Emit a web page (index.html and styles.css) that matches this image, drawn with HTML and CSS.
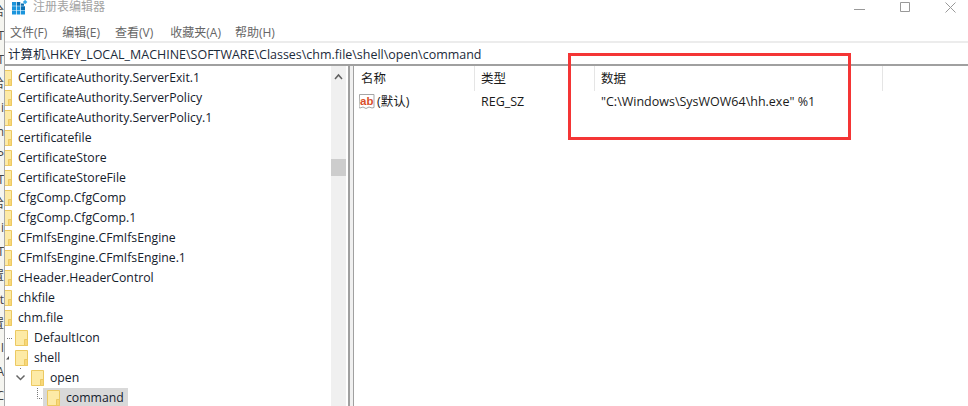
FILE: index.html
```html
<!DOCTYPE html>
<html lang="zh">
<head>
<meta charset="utf-8">
<title>注册表编辑器</title>
<link rel="stylesheet" href="styles.css">
</head>
<body>
<svg class="defs" width="0" height="0" aria-hidden="true">
  <symbol id="folder" viewBox="0 0 13 18">
    <path d="M.5 1.500h12v15H.5z" fill="#fdeaa6" stroke="#ecc962"/>
    <path d="M9.500 16.500v-6h3v6z" fill="#f8d778" stroke="#ecc962"/>
  </symbol>
</svg>
<aside class="behind">
  <span>哈</span><span>T</span><span>T</span><span>给</span><span>i</span><span>n</span><span>P</span><span>T</span><span>给</span><span>i</span><span>T</span><span>置</span><span>t</span><span>置</span><span>I</span><span>A</span><span>C</span>
</aside>
<main class="window">
  <header class="titlebar">
    <svg class="appicon" width="16" height="15" viewBox="0 0 16 15">
      <path d="M0 2h4v3.700H0zM0 6.300h4V10H0zM4.700 6.300h3.600V10H4.700zM0 10.600h4v3.900H0zM4.700 10.600h3.600v3.900H4.700zM9 10.600h4v3.900H9z" fill="#1a94dc"/>
      <path d="M4.700 2h3.600v3.700H4.700zM9 3.500h3v2.200H9zM9 6.300h4V10H9z" fill="#0b6fb2"/>
      <rect x="11.500" y="0.500" width="3.200" height="3.200" fill="#38a9e8" transform="rotate(45 13.100 2.100)"/>
    </svg>
    <span class="title">注册表编辑器</span>
    <div class="controls">
      <svg width="11" height="11" viewBox="0 0 11 11"><path d="M0 7.500h11" stroke="#999" fill="none"/></svg>
      <svg width="10" height="10" viewBox="0 0 10 10"><path d="M.5.500h9v9h-9z" stroke="#999" fill="none"/></svg>
      <svg width="11" height="11" viewBox="0 0 11 11"><path d="M.5.500l10 10M10.500.500l-10 10" stroke="#999" fill="none"/></svg>
    </div>
  </header>
  <nav class="menubar">
    <span>文件(F)</span><span>编辑(E)</span><span class="mid">查看(V)</span><span class="wide">收藏夹(A)</span><span>帮助(H)</span>
  </nav>
  <div class="address">计算机\HKEY_LOCAL_MACHINE\SOFTWARE\Classes\chm.file\shell\open\command</div>
  <div class="panes">
    <section class="tree">
      <ul class="rows">
        <li class="row"><i class="twist"></i><svg class="fold"><use href="#folder"/></svg><span>CertificateAuthority.ServerExit.1</span></li>
        <li class="row"><i class="twist"></i><svg class="fold"><use href="#folder"/></svg><span>CertificateAuthority.ServerPolicy</span></li>
        <li class="row"><i class="twist"></i><svg class="fold"><use href="#folder"/></svg><span>CertificateAuthority.ServerPolicy.1</span></li>
        <li class="row"><i class="twist"></i><svg class="fold"><use href="#folder"/></svg><span>certificatefile</span></li>
        <li class="row"><i class="twist"></i><svg class="fold"><use href="#folder"/></svg><span>CertificateStore</span></li>
        <li class="row"><i class="twist"></i><svg class="fold"><use href="#folder"/></svg><span>CertificateStoreFile</span></li>
        <li class="row"><i class="twist"></i><svg class="fold"><use href="#folder"/></svg><span>CfgComp.CfgComp</span></li>
        <li class="row"><i class="twist"></i><svg class="fold"><use href="#folder"/></svg><span>CfgComp.CfgComp.1</span></li>
        <li class="row"><i class="twist"></i><svg class="fold"><use href="#folder"/></svg><span>CFmIfsEngine.CFmIfsEngine</span></li>
        <li class="row"><i class="twist"></i><svg class="fold"><use href="#folder"/></svg><span>CFmIfsEngine.CFmIfsEngine.1</span></li>
        <li class="row"><i class="twist"></i><svg class="fold"><use href="#folder"/></svg><span>cHeader.HeaderControl</span></li>
        <li class="row"><i class="twist"></i><svg class="fold"><use href="#folder"/></svg><span>chkfile</span></li>
        <li class="row"><i class="twist"></i><svg class="fold"><use href="#folder"/></svg><span>chm.file</span></li>
        <li class="row l1"><i class="twist"><svg width="16" height="20" viewBox="0 0 16 20"><path d="M8 11.500h5" stroke="#777" stroke-dasharray="1 1" fill="none"/></svg></i><svg class="fold"><use href="#folder"/></svg><span>DefaultIcon</span></li>
        <li class="row l1"><i class="twist"><svg width="16" height="20" viewBox="0 0 16 20"><path d="M7 12.500l3-3.500v3.500z" fill="#555"/></svg></i><svg class="fold"><use href="#folder"/></svg><span>shell</span></li>
        <li class="row l2"><i class="twist"><svg width="16" height="20" viewBox="0 0 16 20"><path d="M5.500 1v1" stroke="#777" fill="none"/><path d="M1.500 8.500l4 4 4-4" stroke="#666" stroke-width="1.500" fill="none"/></svg></i><svg class="fold"><use href="#folder"/></svg><span>open</span></li>
        <li class="row l3"><i class="twist"><svg width="16" height="20" viewBox="0 0 16 20"><path d="M6.500 1v10.500H12" stroke="#777" stroke-dasharray="1 1" fill="none"/></svg></i><div class="selected"><svg class="fold"><use href="#folder"/></svg><span>command</span></div></li>
      </ul>
      <div class="scrollbar">
        <svg width="15" height="20" viewBox="0 0 15 20"><path d="M4 13l3.500-4 3.500 4" stroke="#606060" stroke-width="1.500" fill="none"/></svg>
        <div class="thumb"></div>
      </div>
    </section>
    <div class="splitter"></div>
    <section class="list">
      <div class="heads">
        <span class="c1">名称</span><span class="c2">类型</span><span class="c3">数据</span>
      </div>
      <div class="entry">
        <span class="c1 namecell">
          <svg width="16" height="16" viewBox="0 0 16 16">
            <path d="M.5.500h14.500v13l-2 .5-3-1-3 1.500-3-1.500-3 1-1-.5z" fill="#fff" stroke="#a5a5a5"/>
            <text x="7.800" y="10.500" class="ab">ab</text>
          </svg>(默认)</span>
        <span class="c2">REG_SZ</span>
        <span class="c3">"C:\Windows\SysWOW64\hh.exe" %1</span>
      </div>
    </section>
  </div>
</main>
<div class="callout"></div>
</body>
</html>
```
FILE: styles.css
```css
* { box-sizing: border-box; }
html, body { margin: 0; height: 100%; }
body {
  display: flex;
  width: 968px;
  height: 406px;
  overflow: hidden;
  background: #fff;
  font-family: "Open Sans", "Noto Sans CJK SC", sans-serif;
  font-size: 12.500px;
  color: #1a1a1a;
}
.defs { position: absolute; }
.behind {
  width: 4px;
  flex: none;
  overflow: hidden;
  background: #f5f5f0;
  display: flex;
  flex-direction: column;
  font-size: 12px;
  line-height: 24px;
  direction: rtl;
  color: #444;
}
.window { flex: 1; min-width: 0; display: flex; flex-direction: column; border-left: 1px solid #aaa; }
.titlebar { height: 22px; display: flex; align-items: flex-start; padding-left: 7px; }
.appicon { margin: 0; }
.title { margin: -2px 0 0 5px; font-size: 12px; line-height: 18px; color: #a3a3a3; }
.controls { margin-left: auto; display: flex; gap: 35px; padding: 2px 12px 0 0; }
.menubar { height: 19px; display: flex; padding-left: 5px; font-size: 12px; line-height: 21px; color: #666; }
.menubar span { margin-right: 15px; }
.menubar .mid { margin-right: 17px; }
.menubar .wide { margin-right: 14px; }
.address {
  height: 25px;
  border: solid #a0a0a0;
  border-width: 2px 0;
  border-top-color: #ececec;
  padding-left: 3px;
  line-height: 23px;
  font-size: 12.470px;
  color: #1c2a3a;
}
.panes { flex: 1; min-height: 0; display: flex; }
.tree { width: 341px; flex: none; display: flex; overflow: hidden; }
.rows { flex: 1; min-width: 0; margin: 0 0 0 -22px; padding: 1px 0 0; list-style: none; font-size: 12.250px; color: #14202c; }
.row { height: 20px; display: flex; align-items: center; white-space: nowrap; }
.l1 { padding-left: 16px; }
.l2 { padding-left: 32px; }
.l3 { padding-left: 48px; }
.twist { width: 16px; height: 20px; flex: none; display: block; }
.fold { width: 13px; height: 18px; flex: none; margin: 2px 6px 0 0; }
.selected { display: flex; align-items: center; height: 19px; margin-left: -4px; padding: 0 4px; background: #d9d9d9; width: 85px; }
.scrollbar { width: 15px; flex: none; background: #f0f0f0; }
.scrollbar svg { display: block; }
.thumb { height: 17px; margin-top: 73px; background: #cdcdcd; }
.splitter {
  width: 8px;
  flex: none;
  border-left: 2px solid #fff;
  background: linear-gradient(to right, #a0a0a0 2px, #f0f0f0 2px, #f0f0f0 5px, #a0a0a0 5px);
}
.list { flex: 1; min-width: 0; }
.heads, .entry { display: flex; }
.heads { height: 25px; align-items: center; }
.heads span { height: 25px; line-height: 26px; border-right: 1px solid #e5e5e5; }
.entry { height: 22px; line-height: 22px; }
.c1 { width: 121px; padding-left: 7px; }
.c2 { width: 120px; padding-left: 6px; }
.c3 { width: 288px; padding-left: 6px; }
.namecell { display: flex; align-items: center; gap: 2px; padding-left: 5px; }
.ab { font: bold 11.500px "Liberation Sans", sans-serif; fill: #d94f2b; text-anchor: middle; }
.callout {
  position: absolute;
  left: 568px;
  top: 53px;
  width: 283px;
  height: 87px;
  border: 3px solid #f43535;
}
```
